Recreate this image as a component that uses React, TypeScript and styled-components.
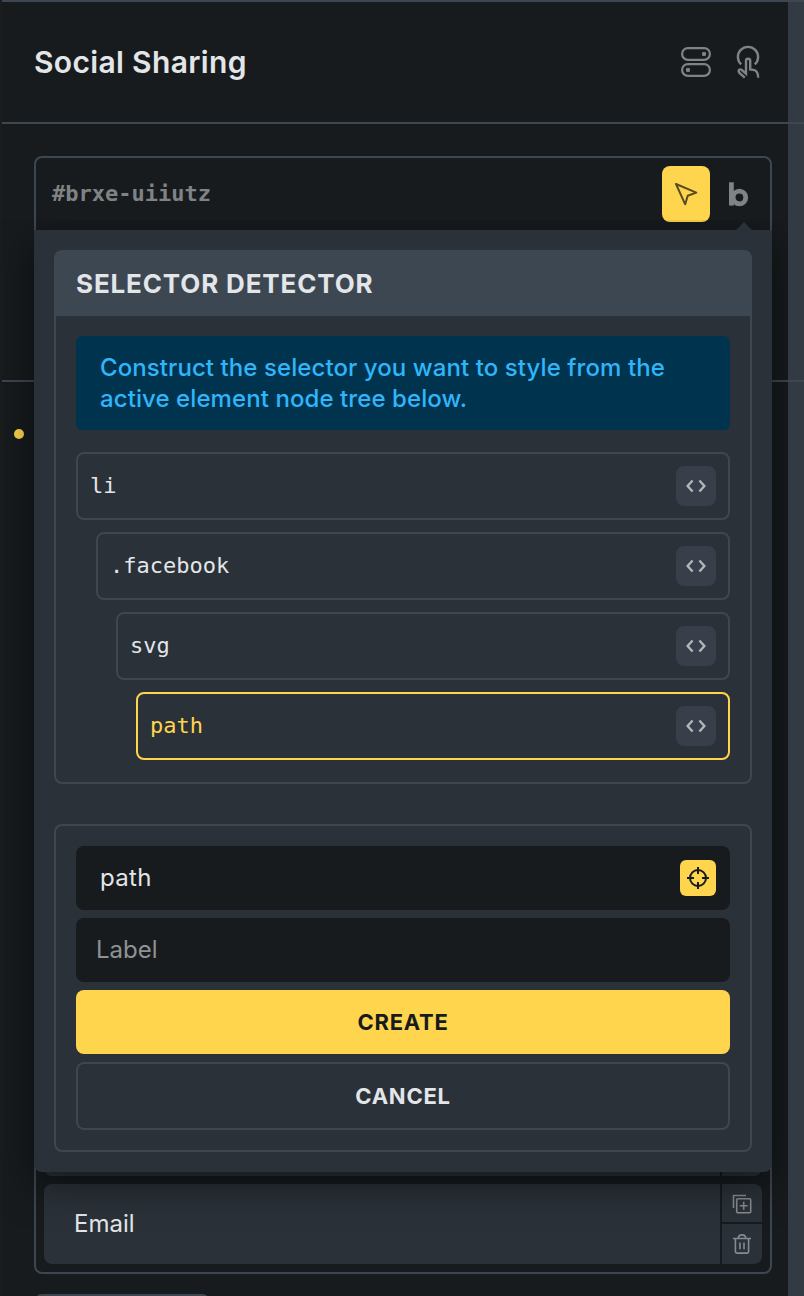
import React from "react";
import styled, { createGlobalStyle } from "styled-components";

const c = {
  bg: "#171b1d",
  panel: "#2a3138",
  line: "#3d4751",
  text: "#e3e6e9",
  muted: "#808384",
  yellow: "#ffd54d",
};

const Global = createGlobalStyle`
  * { box-sizing: border-box; }
  body { margin: 0; background: ${c.bg}; font-family: Inter, sans-serif; color: ${c.text}; }
  button, input { font-family: inherit; margin: 0; padding: 0; }
  svg { display: block; }
`;

const Screen = styled.div`
  width: 804px;
  height: 1296px;
  display: flex;
  overflow: hidden;
  background: #323a44;
`;
const Sidebar = styled.main`
  position: relative;
  width: 788px;
  height: 1296px;
  flex: none;
  background: ${c.bg};
  border-left: 2px solid #1c1c1c;
`;
const Header = styled.header`
  width: 802px;
  height: 124px;
  border-top: 2px solid ${c.line};
  border-bottom: 2px solid ${c.line};
  padding: 0 44px 0 32px;
  display: flex;
  align-items: center;
  justify-content: space-between;
`;
const Title = styled.h1`
  margin: 0;
  font-size: 30px;
  line-height: 40px;
  font-weight: 600;
  letter-spacing: 0.34px;
`;
const HeaderIcons = styled.div`
  display: flex;
  align-items: center;
  gap: 25px;
  color: ${c.muted};
`;
const Selection = styled.section`
  height: 258px;
  width: 802px;
  padding: 32px 32px 0;
  border-bottom: 2px solid ${c.line};
`;
const SelectorBox = styled.div`
  width: 738px;
  height: 160px;
  border: 2px solid ${c.line};
  border-radius: 8px;
  display: flex;
  align-items: flex-start;
  padding: 8px 21px 0 16px;
`;
const SelectorId = styled.span`
  flex: 1;
  font: bold 22px/56px "DejaVu Sans Mono", monospace;
  color: ${c.muted};
`;
const PickButton = styled.button`
  width: 48px;
  height: 56px;
  border: 0;
  border-radius: 8px;
  background: ${c.yellow};
  color: #5a4c20;
  display: grid;
  place-items: center;
`;
const Logo = styled.svg`
  margin: 14px 0 0 19px;
  color: ${c.muted};
`;
const Controls = styled.section`
  padding: 0 32px;
  height: 892px;
`;
const Repeater = styled.div`
  width: 738px;
  height: 892px;
  border: 2px solid ${c.line};
  border-radius: 8px;
  padding: 0 8px 8px;
  display: flex;
  flex-direction: column;
  justify-content: flex-end;
  gap: 8px;
`;
const Item = styled.div`
  height: 80px;
  display: flex;
  gap: 2px;
  border-radius: 8px;
  overflow: hidden;
`;
const ItemTitle = styled.div`
  flex: 1;
  padding-left: 30px;
  background: ${c.panel};
  font-size: 24px;
  line-height: 79px;
`;
const ItemActions = styled.div`
  width: 40px;
  display: grid;
  grid-template-rows: 38px 40px;
  gap: 2px;
  color: #878b91;
`;
const ItemAction = styled.div`
  background: ${c.panel};
  display: grid;
  place-items: center;
  &:first-child { padding-top: 2px; }
`;
const AddButton = styled.div`
  margin: 20px 0 0 32px;
  width: 176px;
  height: 60px;
  border-radius: 8px;
  background: ${c.line};
`;
const ActiveDot = styled.i`
  position: absolute;
  left: 12px;
  top: 429px;
  width: 10px;
  height: 10px;
  border-radius: 50%;
  background: ${c.yellow};
`;
const Popup = styled.div`
  position: absolute;
  left: 32px;
  top: 230px;
  width: 738px;
  height: 942px;
  padding: 20px;
  background: ${c.panel};
  border-radius: 0 0 8px 8px;
  clip-path: inset(-10px -16px -60px -34px);
  box-shadow: 0 12px 40px rgba(0, 0, 0, 0.5);
  &::before {
    content: "";
    position: absolute;
    right: 20px;
    top: -8px;
    border: solid transparent;
    border-width: 0 8px 8px;
    border-bottom-color: ${c.panel};
  }
`;
const Card = styled.section`
  width: 698px;
  border: 2px solid ${c.line};
  border-radius: 8px;
`;
const CardTitle = styled.h2`
  margin: 0;
  height: 64px;
  padding-left: 20px;
  background: ${c.line};
  font-size: 26px;
  line-height: 64px;
  font-weight: 650;
  letter-spacing: 0.86px;
`;
const TreeBody = styled.div`
  padding: 20px 20px 22px;
`;
const Notice = styled.p`
  margin: 0 0 22px;
  height: 94px;
  padding: 16px 24px;
  border-radius: 6px;
  background: #00344e;
  color: #31b5fa;
  font-size: 24px;
  line-height: 31px;
  font-weight: 450;
  letter-spacing: 0.08px;
  white-space: nowrap;
`;
const Tree = styled.div`
  display: flex;
  flex-direction: column;
  gap: 12px;
`;
const Node = styled.div<{ $depth: number; $active?: boolean }>`
  height: 68px;
  margin-left: ${(p) => p.$depth * 20}px;
  padding: 0 12px;
  border: 2px solid ${(p) => (p.$active ? c.yellow : c.line)};
  border-radius: 8px;
  color: ${(p) => (p.$active ? c.yellow : c.text)};
  display: flex;
  align-items: center;
  justify-content: space-between;
  font: 22px/62px "DejaVu Sans Mono", monospace;
`;
const CodeButton = styled.button`
  width: 40px;
  height: 40px;
  border: 0;
  border-radius: 8px;
  background: #383f4a;
  color: #b4b8bd;
  display: grid;
  place-items: center;
`;
const Form = styled(Card)`
  margin-top: 40px;
  padding: 20px;
  display: grid;
  grid-template-rows: 64px 64px 64px 68px;
  gap: 8px;
`;
const Field = styled.label<{ $inset: number }>`
  display: flex;
  align-items: center;
  padding: 0 14px 0 ${(p) => p.$inset}px;
  border-radius: 8px;
  background: ${c.bg};
`;
const Input = styled.input`
  flex: 1;
  min-width: 0;
  padding-bottom: 2px;
  border: 0;
  outline: 0;
  background: none;
  color: ${c.text};
  font-size: 24px;
  letter-spacing: 0.3px;
  &::placeholder { color: #8f9294; opacity: 1; letter-spacing: 0; }
`;
const TargetButton = styled.button`
  width: 36px;
  height: 36px;
  border: 0;
  border-radius: 6px;
  background: ${c.yellow};
  color: ${c.bg};
  display: grid;
  place-items: center;
`;
const Action = styled.button<{ $primary?: boolean }>`
  border: ${(p) => (p.$primary ? "0" : `2px solid ${c.line}`)};
  border-radius: 8px;
  background: ${(p) => (p.$primary ? c.yellow : "transparent")};
  color: ${(p) => (p.$primary ? c.bg : c.text)};
  font-size: 22px;
  font-weight: 700;
  letter-spacing: 0.75px;
`;

const Toggles = () => (
  <svg width="30" height="32" viewBox="0 0 30 32" fill="none" stroke="currentColor" strokeWidth="2.2">
    <rect x="1.1" y="2.1" width="27.8" height="11.7" rx="5.8" />
    <rect x="1.1" y="18.1" width="27.8" height="11.7" rx="5.8" />
    <circle cx="23" cy="8" r="2.2" fill="currentColor" stroke="none" />
    <circle cx="7" cy="24" r="2.2" fill="currentColor" stroke="none" />
  </svg>
);
const Touch = () => (
  <svg width="24" height="34" viewBox="0 0 24 34" fill="none" stroke="currentColor" strokeWidth="2.4">
    <path d="M5.2 19.4A10.1 10.1 0 1 1 18.8 19.4" />
    <path d="M8.8 32.6 3.7 28.2C1.2 25.3 4 23.3 5.8 25L10 28.6V15.5c0-2.4 4.2-2.4 4.2 0V24.5l3 .4c3.7.5 5 3 5 7.9" />
  </svg>
);
const Code = () => (
  <svg width="20" height="14" viewBox="0 0 20 14" fill="none" stroke="currentColor" strokeWidth="2.3">
    <path d="M6.6 1.4 1.6 7l5 5.6M13.4 1.4 18.4 7l-5 5.6" />
  </svg>
);
const Cursor = () => (
  <svg width="24" height="24" viewBox="0 0 24 24" fill="none" stroke="currentColor" strokeWidth="2" strokeLinejoin="round">
    <path d="M2 2 22.3 10.6 13.7 13.8 11.2 22.3Z" />
  </svg>
);
const Target = () => (
  <svg width="24" height="24" viewBox="0 0 24 24" fill="none" stroke="currentColor" strokeWidth="2">
    <circle cx="12" cy="12" r="8" />
    <path d="M12 1v7M12 16v7M1 12h7M16 12h7" />
  </svg>
);
const Duplicate = () => (
  <svg width="20" height="20" viewBox="0 0 20 20" fill="none" stroke="currentColor" strokeWidth="1.6">
    <path d="M1.5 14V1.5H14" />
    <rect x="4.7" y="4.7" width="14" height="14" rx="1" />
    <path d="M11.7 7.7v8M7.7 11.7h8" />
  </svg>
);
const Trash = () => (
  <svg width="20" height="22" viewBox="0 0 20 22" fill="none" stroke="currentColor" strokeWidth="1.6">
    <path d="M1 5.5h18M3.4 5.5v13.1c0 1 .6 1.5 1.5 1.5h10.2c.9 0 1.5-.5 1.5-1.5V5.5M6.3 5.3c.3-4.6 7.1-4.6 7.4 0M8 9.4v6.8M12 9.4v6.8" />
  </svg>
);

const nodes = ["li", ".facebook", "svg", "path"];

export default function App() {
  return (
    <Screen>
      <Global />
      <Sidebar>
        <Header>
          <Title>Social Sharing</Title>
          <HeaderIcons><Toggles /><Touch /></HeaderIcons>
        </Header>
        <Selection>
          <SelectorBox>
            <SelectorId>#brxe-uiiutz</SelectorId>
            <PickButton><Cursor /></PickButton>
            <Logo width="20" height="28" viewBox="0 0 20 28">
              <rect x="0" y="2.3" width="4.8" height="23.3" fill="currentColor" />
              <circle cx="10.4" cy="17.5" r="6.3" fill="none" stroke="currentColor" strokeWidth="4.8" />
            </Logo>
          </SelectorBox>
        </Selection>
        <Controls>
          <Repeater>
            <Item><ItemTitle /><ItemActions><ItemAction /><ItemAction /></ItemActions></Item>
            <Item>
              <ItemTitle>Email</ItemTitle>
              <ItemActions>
                <ItemAction><Duplicate /></ItemAction>
                <ItemAction><Trash /></ItemAction>
              </ItemActions>
            </Item>
          </Repeater>
        </Controls>
        <AddButton />
        <ActiveDot />
        <Popup>
          <Card>
            <CardTitle>SELECTOR DETECTOR</CardTitle>
            <TreeBody>
              <Notice>Construct the selector you want to style from the<br />active element node tree below.</Notice>
              <Tree>
                {nodes.map((name, i) => (
                  <Node key={name} $depth={i} $active={i === nodes.length - 1}>
                    {name}
                    <CodeButton><Code /></CodeButton>
                  </Node>
                ))}
              </Tree>
            </TreeBody>
          </Card>
          <Form>
            <Field $inset={24}>
              <Input defaultValue="path" />
              <TargetButton><Target /></TargetButton>
            </Field>
            <Field $inset={20}><Input placeholder="Label" /></Field>
            <Action $primary>CREATE</Action>
            <Action>CANCEL</Action>
          </Form>
        </Popup>
      </Sidebar>
    </Screen>
  );
}
